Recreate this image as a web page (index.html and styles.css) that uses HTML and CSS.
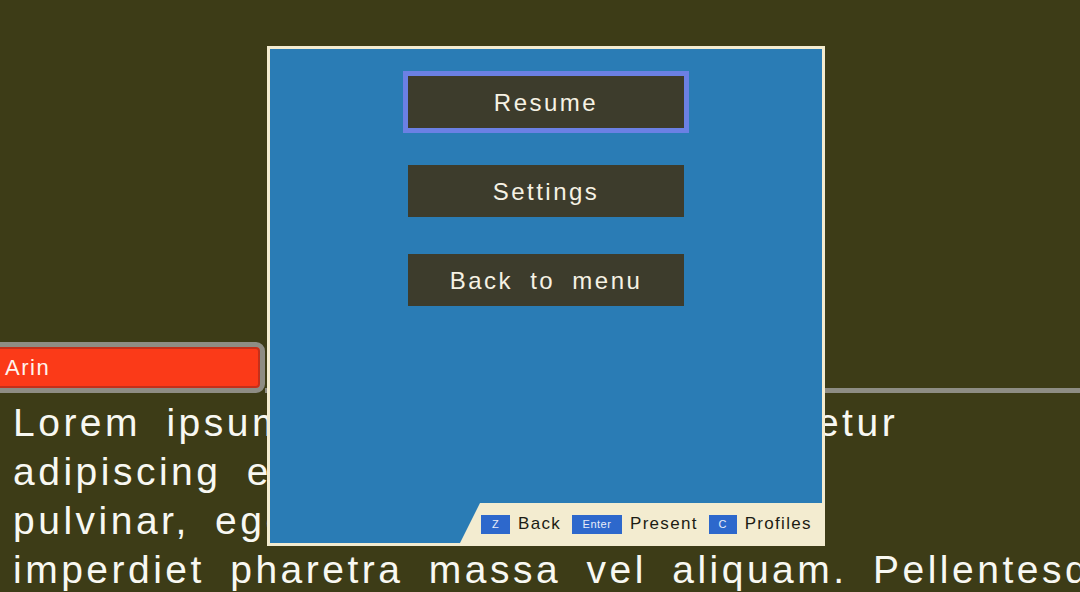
FILE: index.html
```html
<!DOCTYPE html>
<html lang="en">
<head>
<meta charset="utf-8">
<title>Pause menu</title>
<link rel="stylesheet" href="styles.css">
</head>
<body>
<div class="stage">
  <div class="scene"></div>
  <div class="name-row">
    <div class="name-tag">Arin</div>
    <div class="name-line"></div>
  </div>
  <div class="dialogue">
    <span class="line">Lorem ipsum dolor sit amet, consectetur</span>
    <span class="line">adipiscing elit. Sed ut tortor a mi</span>
    <span class="line">pulvinar, eget tempus justo. Aliquam</span>
    <span class="line">imperdiet pharetra massa vel aliquam. Pellentesque</span>
  </div>

  <div class="modal">
    <nav class="menu">
      <button class="menu-btn selected">Resume</button>
      <button class="menu-btn">Settings</button>
      <button class="menu-btn">Back to menu</button>
    </nav>
    <div class="hints">
      <span class="key">Z</span><span class="hint">Back</span>
      <span class="key">Enter</span><span class="hint">Present</span>
      <span class="key">C</span><span class="hint">Profiles</span>
    </div>
  </div>
</div>
</body>
</html>
```

FILE: styles.css
```css
html, body {
  margin: 0;
  padding: 0;
}
body {
  width: 1080px;
  height: 592px;
  overflow: hidden;
  background: #3d3c17;
  font-family: "Liberation Sans", Arial, sans-serif;
}
.stage {
  position: relative;
  width: 1080px;
  height: 592px;
  display: flex;
  flex-direction: column;
  overflow: hidden;
}
.scene {
  height: 342px;
  flex: none;
}
.name-row {
  display: flex;
  align-items: flex-end;
  height: 51px;
  flex: none;
}
.name-tag {
  flex: none;
  width: 255px;
  height: 41px;
  margin-left: -10px;
  padding-left: 10px;
  border: 5px solid #8e8d84;
  border-radius: 9px;
  background: #fb3a18;
  box-shadow: inset 0 0 0 2px #c4301a;
  color: #fff4ee;
  font-size: 22px;
  letter-spacing: 1.5px;
  line-height: 42px;
  box-sizing: content-box;
}
.name-line {
  flex: 1;
  height: 5px;
  background: #8e8d84;
}
.dialogue {
  padding: 5px 0 0 13px;
  color: #f8f8f2;
  font-size: 39px;
  line-height: 49px;
  letter-spacing: 3.5px;
  word-spacing: 11px;
  white-space: nowrap;
}
.line {
  display: block;
}

.modal {
  position: absolute;
  left: 267px;
  top: 46px;
  width: 552px;
  height: 494px;
  border: 3px solid #f3ecd0;
  background: #2a7cb5;
  display: flex;
  flex-direction: column;
  align-items: center;
}
.menu {
  display: flex;
  flex-direction: column;
  align-items: center;
  gap: 37px;
  padding-top: 27px;
}
.menu-btn {
  width: 276px;
  height: 52px;
  border: none;
  margin: 0;
  padding: 2px 0 0;
  background: #3d3c2c;
  color: #f6f2e4;
  font-family: "Liberation Sans", Arial, sans-serif;
  font-size: 24px;
  letter-spacing: 2.5px;
  word-spacing: 8px;
}
.menu-btn.selected {
  outline: 5px solid #6b80e4;
}
.hints {
  margin-top: auto;
  align-self: flex-end;
  width: 362px;
  height: 40px;
  padding-left: 21px;
  background: #f3ecd0;
  clip-path: polygon(20px 0, 100% 0, 100% 100%, 0 100%);
  display: flex;
  align-items: center;
  padding-top: 2px;
  box-sizing: border-box;
}
.key {
  flex: none;
  height: 19px;
  box-sizing: border-box;
  text-align: center;
  background: #2d68cc;
  color: #e8ecf8;
  font-size: 11px;
  line-height: 19px;
  letter-spacing: 0.5px;
  margin-right: 8px;
  width: 29px;
}
.key:nth-of-type(3) {
  width: 50px;
}
.key:nth-of-type(5) {
  width: 28px;
}
.hint {
  flex: none;
  color: #1c1c14;
  font-size: 17px;
  letter-spacing: 1.3px;
  margin-right: 11px;
}
```
